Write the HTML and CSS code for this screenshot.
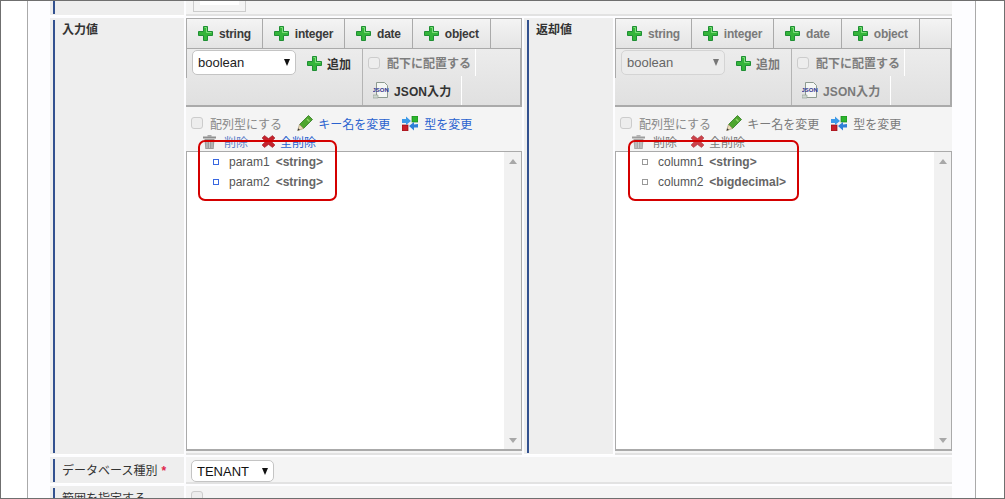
FILE: index.html
```html
<!DOCTYPE html>
<html lang="ja">
<head>
    <meta charset="UTF-8">
    <meta name="viewport" content="width=device-width, initial-scale=1.0">
    <title>入力値と返却値</title>
    <link rel="stylesheet" href="styles.css">
</head>
<body>
    <svg class="icon-defs" width="0" height="0">
        <symbol id="i-plus" viewBox="0 0 15 15">
            <path d="M5.5 .5h4v5h5v4h-5v5h-4v-5h-5v-4h5z" fill="#35b53a" stroke="#1f8f34"/>
            <path d="M6.5 1.5h2v5h5" fill="none" stroke="#7ede7a"/>
        </symbol>
        <symbol id="i-pencil" viewBox="0 0 16 16">
            <path d="M11.500 .5l4 4L6.500 13.500 2.500 9.500z" fill="#4fa62e" stroke="#2f7a1e" stroke-width=".8"/>
            <path d="M10 4l2.500 2.500" stroke="#8fd468" stroke-width="1.500"/>
            <path d="M2.500 9.500l4 4L.6 15.600z" fill="#ecdcb8" stroke="#9a8a66" stroke-width=".6"/>
            <path d="M.6 15.600l.7-2.400 1.700 1.700z" fill="#333"/>
        </symbol>
        <symbol id="i-swap" viewBox="0 0 16 15">
            <rect x="10" y="0" width="6" height="6" fill="#2cb52c" stroke="#14801c" stroke-width=".7"/>
            <rect x="0" y="9" width="6" height="6" fill="#c8202a" stroke="#8c1018" stroke-width=".7"/>
            <path d="M0 7V3h4V.5l5 4.500-5 4V7H2z" fill="#3c9ae8"/>
            <path d="M16 8v3.500h-4v3l-5-4.500 5-4v2.500z" fill="#2f7fd8"/>
        </symbol>
        <symbol id="i-trash" viewBox="0 0 13 14">
            <rect x="0" y="1.500" width="13" height="2" fill="#8e8e8e"/>
            <rect x="4.500" y="0" width="4" height="2" fill="#a8a8a8"/>
            <path d="M1.500 4h10l-.8 10H2.300z" fill="#9c9c9c"/>
            <path d="M4 5v8M6.500 5v8M9 5v8" stroke="#c8c8c8"/>
        </symbol>
        <symbol id="i-cross" viewBox="0 0 13 13">
            <path d="M2.500 .5l4 3 4-3 2.500 2.500-3.500 3.500L13 10 10.500 12.500l-4-3-4 3L0 10l3.500-3.500L0 3z" fill="#c4222c" stroke="#96141c" stroke-width=".5"/>
        </symbol>
        <symbol id="i-json" viewBox="0 0 16 17">
            <path d="M3.500 .5h8l3 3v12h-11z" fill="#f4f6f4" stroke="#8d9a90"/>
            <text x="-.5" y="9.500" font-family="Liberation Sans" font-size="6" font-weight="bold" fill="#34348c">JSON</text>
            <path d="M0 13h5v3H0z" fill="#cfd8d0" stroke="#8d9a90" stroke-width=".6"/>
        </symbol>
    </svg>

    <div class="frame">
        <div class="page">
            <div class="form-row row-top">
                <div class="form-label"><div class="label-text"></div></div>
                <div class="form-field"><div class="stub-button"><span></span></div></div>
            </div>

            <div class="form-row row-double">
                <div class="form-label"><div class="label-text strong">入力値</div></div>
                <div class="form-field">
                    <div class="tabs">
                        <div class="tab"><svg class="ico"><use href="#i-plus"/></svg>string</div>
                        <div class="tab"><svg class="ico"><use href="#i-plus"/></svg>integer</div>
                        <div class="tab"><svg class="ico"><use href="#i-plus"/></svg>date</div>
                        <div class="tab"><svg class="ico"><use href="#i-plus"/></svg>object</div>
                    </div>
                    <div class="controls">
                        <div class="control-main">
                            <div class="select-box wide">
                                <select><option>boolean</option></select>
                            </div>
                            <span class="add-button"><svg class="ico"><use href="#i-plus"/></svg>追加</span>
                        </div>
                        <div class="control-side">
                            <div class="side-line first">
                                <input type="checkbox" class="check" disabled>
                                <span class="muted-bold">配下に配置する</span>
                            </div>
                            <div class="side-line second">
                                <svg class="ico-json"><use href="#i-json"/></svg>
                                <span class="json-label">JSON入力</span>
                            </div>
                        </div>
                    </div>
                    <div class="toolbar">
                        <div class="tool-line">
                            <input type="checkbox" class="check" disabled>
                            <span class="tool-muted">配列型にする</span>
                            <svg class="ico-pencil"><use href="#i-pencil"/></svg>
                            <a class="tool-link">キー名を変更</a>
                            <svg class="ico-swap"><use href="#i-swap"/></svg>
                            <a class="tool-link">型を変更</a>
                        </div>
                        <div class="tool-line indent">
                            <svg class="ico-trash"><use href="#i-trash"/></svg>
                            <a class="tool-link faded">削除</a>
                            <svg class="ico-cross"><use href="#i-cross"/></svg>
                            <a class="tool-link">全削除</a>
                        </div>
                    </div>
                    <div class="tree">
                        <ul class="tree-list">
                            <li><i class="node"></i>param1<b>&lt;string&gt;</b></li>
                            <li><i class="node"></i>param2<b>&lt;string&gt;</b></li>
                        </ul>
                        <div class="scroll"><i class="arrow-up"></i><i class="arrow-down"></i></div>
                    </div>
                    <div class="mark mark-left"></div>
                </div>

                <div class="form-label"><div class="label-text strong">返却値</div></div>
                <div class="form-field disabled">
                    <div class="tabs">
                        <div class="tab"><svg class="ico"><use href="#i-plus"/></svg>string</div>
                        <div class="tab"><svg class="ico"><use href="#i-plus"/></svg>integer</div>
                        <div class="tab"><svg class="ico"><use href="#i-plus"/></svg>date</div>
                        <div class="tab"><svg class="ico"><use href="#i-plus"/></svg>object</div>
                    </div>
                    <div class="controls">
                        <div class="control-main">
                            <div class="select-box wide">
                                <select disabled><option>boolean</option></select>
                            </div>
                            <span class="add-button"><svg class="ico"><use href="#i-plus"/></svg>追加</span>
                        </div>
                        <div class="control-side">
                            <div class="side-line first">
                                <input type="checkbox" class="check" disabled>
                                <span class="muted-bold">配下に配置する</span>
                            </div>
                            <div class="side-line second">
                                <svg class="ico-json"><use href="#i-json"/></svg>
                                <span class="json-label">JSON入力</span>
                            </div>
                        </div>
                    </div>
                    <div class="toolbar">
                        <div class="tool-line">
                            <input type="checkbox" class="check" disabled>
                            <span class="tool-muted">配列型にする</span>
                            <svg class="ico-pencil"><use href="#i-pencil"/></svg>
                            <a class="tool-link">キー名を変更</a>
                            <svg class="ico-swap"><use href="#i-swap"/></svg>
                            <a class="tool-link">型を変更</a>
                        </div>
                        <div class="tool-line indent">
                            <svg class="ico-trash"><use href="#i-trash"/></svg>
                            <a class="tool-link faded">削除</a>
                            <svg class="ico-cross"><use href="#i-cross"/></svg>
                            <a class="tool-link">全削除</a>
                        </div>
                    </div>
                    <div class="tree">
                        <ul class="tree-list">
                            <li><i class="node"></i>column1<b>&lt;string&gt;</b></li>
                            <li><i class="node"></i>column2<b>&lt;bigdecimal&gt;</b></li>
                        </ul>
                        <div class="scroll"><i class="arrow-up"></i><i class="arrow-down"></i></div>
                    </div>
                    <div class="mark mark-right"></div>
                </div>
            </div>

            <div class="form-row row-db">
                <div class="form-label"><div class="label-text">データベース種別<span class="required">*</span></div></div>
                <div class="form-field">
                    <div class="select-box narrow">
                        <select><option>TENANT</option></select>
                    </div>
                </div>
            </div>

            <div class="form-row row-range">
                <div class="form-label"><div class="label-text">範囲を指定する</div></div>
                <div class="form-field"><input type="checkbox" class="check" disabled></div>
            </div>
        </div>
    </div>
</body>
</html>
```

FILE: styles.css
```css
html, body {
    margin: 0;
    height: 499px;
    overflow: hidden;
    background: white;
}

body {
    font-family: "Liberation Sans", "Noto Sans CJK JP", sans-serif;
    font-size: 12px;
    color: #333;
}

.icon-defs {
    display: block;
    height: 0;
}

.frame {
    box-sizing: border-box;
    height: 499px;
    border: 1px solid #6f6f6f;
    overflow: hidden;
    padding-left: 26px;
}

.page {
    box-sizing: border-box;
    width: 949px;
    height: 497px;
    border-left: 1px solid #aaa;
    border-right: 1px solid #aaa;
    background: #fdfdff;
    padding: 0 22px;
    overflow: hidden;
}

.form-row {
    display: grid;
    grid-template-columns: 134px 766px;
    column-gap: 2px;
    margin-bottom: 2px;
}

.row-top {
    height: 15px;
}

.row-double {
    grid-template-columns: 134px 336px 89px 337px;
    height: 437px;
}

.row-db {
    height: 27px;
}

.row-range {
    height: 20px;
}

.form-label {
    background: #eee;
    padding: 2px 0 1px 3px;
    border-bottom: 1px solid white;
    box-sizing: border-box;
}

.row-top .form-label {
    padding-top: 0;
}

.label-text {
    box-sizing: border-box;
    height: 100%;
    border-left: 2px solid #33518f;
    padding: 1px 0 0 7px;
    line-height: 18px;
}

.label-text.strong {
    font-weight: bold;
}

.row-db .label-text {
    padding-top: 3px;
}

.row-range .label-text {
    padding-top: 2px;
}

.required {
    color: #e0244a;
    font-weight: bold;
    margin-left: 4px;
}

.form-field {
    position: relative;
    box-sizing: border-box;
    background: #f4f4f4;
    border-bottom: 2px solid #e2e2e2;
}

.row-range .form-field {
    padding: 5px 0 0 5px;
}

.stub-button {
    box-sizing: border-box;
    width: 53px;
    height: 11px;
    margin-left: 7px;
    padding: 0 6px;
    border: 1px solid #ccc;
    border-top: none;
    background: #f4f4f4;
}

.stub-button span {
    display: block;
    height: 4px;
    background: white;
}

/* タブとコントロール */
.tabs {
    display: flex;
    height: 31px;
    box-sizing: border-box;
    border: 1px solid #aaa;
    background: linear-gradient(#f4f4f4, #e4e4e4);
}

.tab {
    display: flex;
    align-items: center;
    gap: 6px;
    padding: 0 11px;
    border-right: 1px solid #aaa;
    font-weight: bold;
    letter-spacing: -.25px;
    color: #3a3a3a;
}

.ico {
    width: 15px;
    height: 15px;
    flex: none;
}

.controls {
    display: flex;
    height: 58px;
    box-sizing: border-box;
    border-bottom: 2px solid #aaa;
    border-right: 2px solid #aaa;
    background: linear-gradient(#aaa, #aaa) 0 0 / 1px 29px no-repeat, linear-gradient(#ececec, #e0e0e0);
}

.control-main {
    box-sizing: border-box;
    width: 177px;
    padding: 1px 0 0 6px;
    display: flex;
    align-items: flex-start;
    border-right: 1px solid #b4b4b4;
}

.select-box {
    position: relative;
    box-sizing: border-box;
    background: white;
    border: 1px solid #c4c4c4;
    border-radius: 5px;
}

.select-box::after {
    content: "";
    position: absolute;
    top: 8px;
    right: 5px;
    border-left: 3.5px solid transparent;
    border-right: 3.5px solid transparent;
    border-top: 7px solid #111;
    pointer-events: none;
}

.select-box select {
    display: block;
    width: 100%;
    height: 100%;
    padding: 0 0 0 5px;
    border: none;
    outline: none;
    background: transparent;
    appearance: none;
    opacity: 1;
    font: 13px "Liberation Sans", sans-serif;
    color: #222;
}

.select-box.wide {
    width: 104px;
    height: 25px;
}

.select-box.narrow {
    width: 83px;
    height: 22px;
    margin: 3px 0 0 5px;
}

.select-box.narrow::after {
    top: 7px;
}

.select-box.narrow select {
    color: #111;
}

.add-button {
    display: flex;
    align-items: center;
    gap: 5px;
    margin: 5px 0 0 11px;
    font-weight: bold;
    color: #333;
}

.control-side {
    display: flex;
    flex-direction: column;
    align-items: flex-start;
}

.side-line {
    display: flex;
    align-items: center;
    box-sizing: border-box;
    border-right: 1px solid white;
}

.side-line.first {
    width: 113px;
    height: 27px;
    padding-left: 5px;
    gap: 7px;
}

.side-line.second {
    width: 99px;
    height: 29px;
    padding-left: 10px;
    gap: 5px;
}

.muted-bold {
    font-weight: bold;
    color: #7d7d7d;
    white-space: nowrap;
}

.json-label {
    font-weight: bold;
    letter-spacing: .1px;
    white-space: nowrap;
}

.ico-json {
    width: 16px;
    height: 17px;
    flex: none;
}

.check {
    appearance: none;
    box-sizing: border-box;
    display: block;
    width: 12px;
    height: 12px;
    margin: 0;
    flex: none;
    background: #ededed;
    border: 1px solid #ccc;
    border-radius: 3px;
}

/* ツールバー */
.toolbar {
    height: 44px;
    box-sizing: border-box;
    padding: 7px 0 0 5px;
}

.tool-line {
    display: flex;
    align-items: center;
    height: 18px;
    white-space: nowrap;
}

.tool-line.indent {
    padding-left: 12px;
    height: 19px;
}

.tool-muted {
    color: #888;
    margin-left: 7px;
}

.tool-link {
    color: #2a62cf;
}

.tool-link.faded {
    color: #5f80c8;
}

.ico-pencil {
    width: 16px;
    height: 16px;
    margin: 0 5px 0 15px;
}

.ico-swap {
    width: 16px;
    height: 15px;
    margin: 0 6px 0 12px;
}

.ico-trash {
    width: 13px;
    height: 14px;
    margin-right: 8px;
}

.ico-cross {
    width: 13px;
    height: 13px;
    margin: 0 5px 0 14px;
}

/* ツリー */
.tree {
    display: flex;
    height: 300px;
    box-sizing: border-box;
    border: 1px solid #aaa;
    border-bottom-width: 2px;
    background: white;
}

.tree-list {
    flex: 1;
    list-style: none;
    margin: 0;
    padding: 0 0 0 26px;
}

.tree-list li {
    display: flex;
    align-items: center;
    height: 20px;
    color: #555;
}

.tree-list b {
    margin-left: 6px;
    color: #666;
}

.node {
    box-sizing: border-box;
    width: 6px;
    height: 6px;
    margin-right: 10px;
    border: 1px solid #3a68e0;
}

.scroll {
    width: 17px;
    display: flex;
    flex-direction: column;
    align-items: center;
    justify-content: space-between;
    padding: 7px 0 6px;
    background: #f1f1f1;
}

.arrow-up, .arrow-down {
    border-left: 4px solid transparent;
    border-right: 4px solid transparent;
}

.arrow-up {
    border-bottom: 5px solid #a8a8a8;
}

.arrow-down {
    border-top: 5px solid #a8a8a8;
}

/* 注釈の赤枠 */
.mark {
    position: absolute;
    top: 122px;
    height: 61px;
    box-sizing: border-box;
    border: 2px solid #d40000;
    border-radius: 7px;
}

.mark-left {
    left: 12px;
    width: 139px;
}

.mark-right {
    left: 13px;
    width: 171px;
}

/* 右側は無効状態 */
.disabled .tab,
.disabled .add-button,
.disabled .json-label,
.disabled .tool-link {
    color: #7a7a7a;
}

.disabled .select-box {
    background: #ececec;
    border-color: #d4d4d4;
}

.disabled .select-box::after {
    border-top-color: #777;
}

.disabled .select-box select {
    color: #666;
}

.disabled .node {
    border-color: #999;
}

.disabled .ico-trash,
.disabled .ico-cross {
    opacity: .85;
}
```
